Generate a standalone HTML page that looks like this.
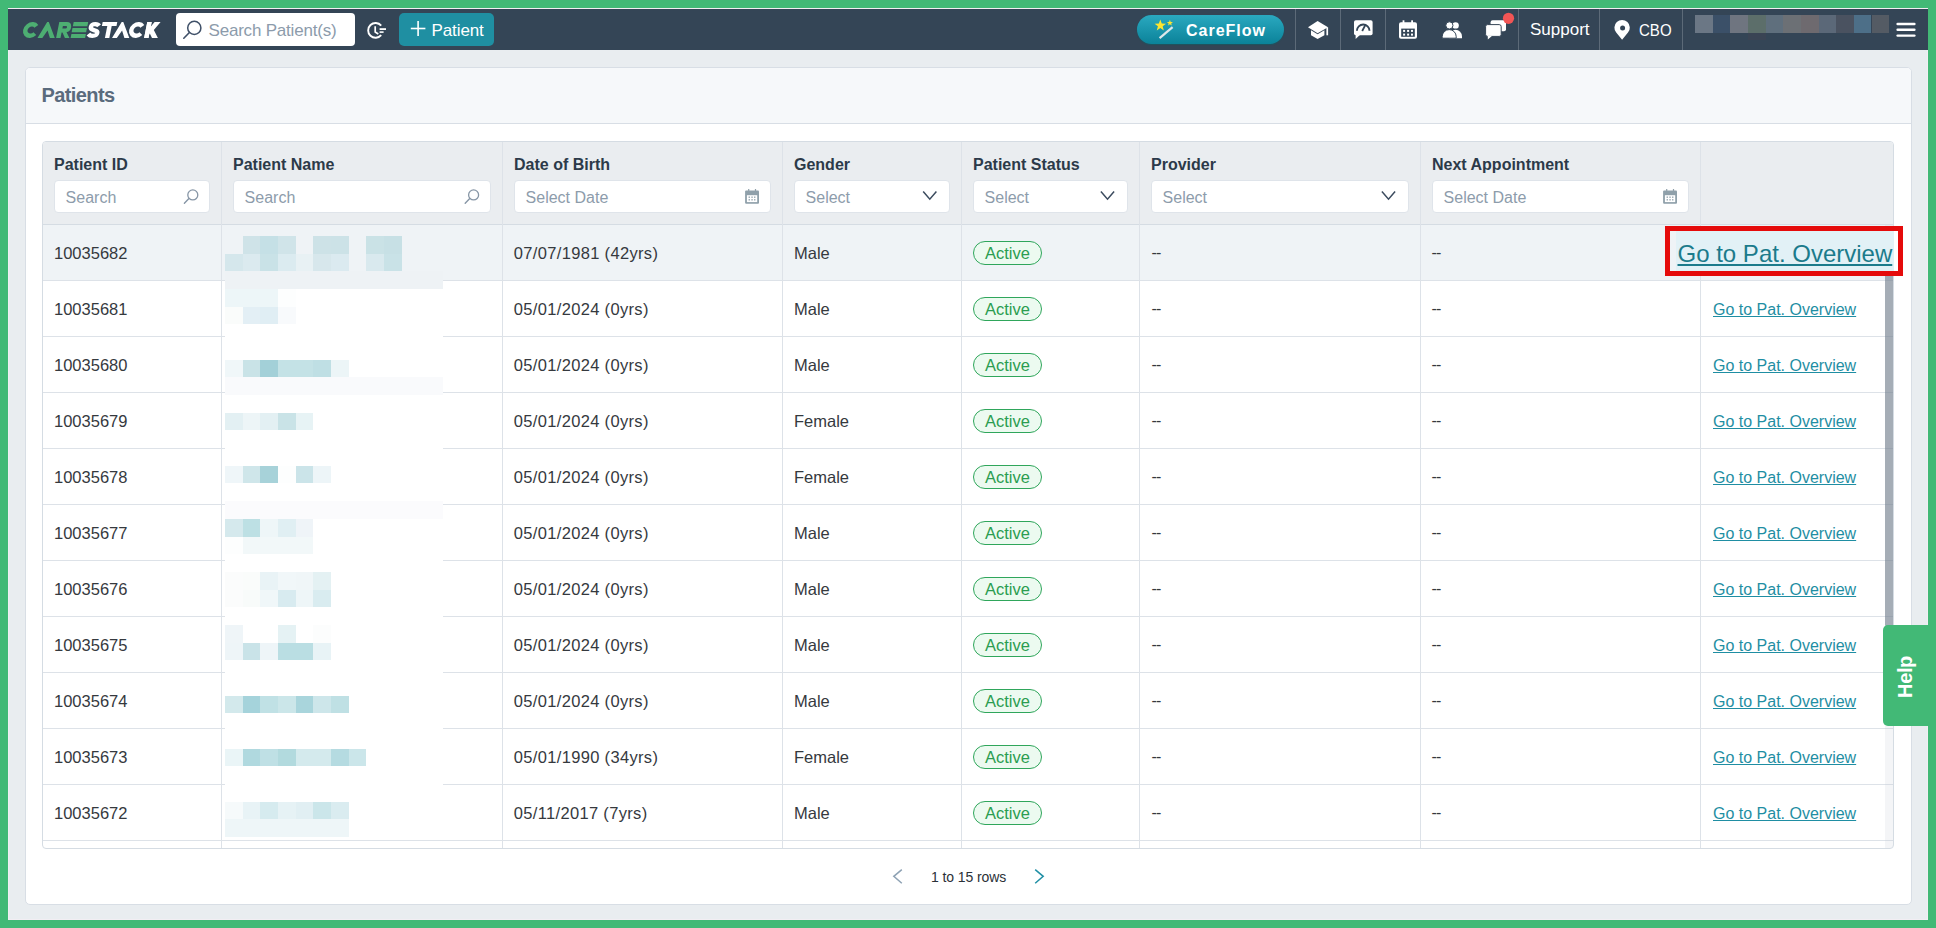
<!DOCTYPE html><html><head><meta charset="utf-8"><title>Patients</title><style>
*{box-sizing:border-box;margin:0;padding:0}
html,body{width:1936px;height:928px;overflow:hidden}
body{background:#42b976;font-family:"Liberation Sans",sans-serif;position:relative}
.a{position:absolute}
#inner{left:8px;top:8px;width:1920px;height:912px;background:#e9edf0;border:1px solid #f2eef3}
#nav{left:8px;top:9px;width:1920px;height:41px;background:#344556}
.t{position:absolute;white-space:nowrap;line-height:20px}
.sep{position:absolute;top:9px;width:1px;height:41px;background:#5c6a78}
#card{left:25px;top:67px;width:1887px;height:838px;background:#fff;border:1px solid #d8dee5;border-radius:5px;overflow:hidden}
#chead{left:0;top:0;width:1885px;height:56px;background:#f6f8fa;border-bottom:1px solid #d8dee5}
#tbl{left:42px;top:141px;width:1852px;height:708px;border:1px solid #d5dce3;border-radius:4px;overflow:hidden;background:#fff}
.hdr{position:absolute;left:0;top:0;width:1850px;height:83px;background:#eaedf0;border-bottom:1px solid #d5dce3}
.vl{position:absolute;top:0;width:1px;height:708px;background:#dde2e8}
.hl{position:absolute;left:0;width:1850px;height:1px;background:#dde2e8}
.lab{font-weight:bold;font-size:16px;color:#2c3a49}
.inp{position:absolute;top:38px;height:32px;background:#fff;border:1px solid #dfe4ea;border-radius:4px}
.ph{font-size:16px;color:#8d9cab}
.cell{font-size:16.5px;color:#35393e}
.dob{letter-spacing:0.33px}
.dash{letter-spacing:-0.9px;font-size:16px;margin-top:-0.5px}
.badge{position:absolute;width:69px;height:24px;border:1px solid #2fa65b;border-radius:12px;background:#ecfaf0;color:#2b9d50;font-size:16.5px;line-height:23px;text-align:center}
.lnk{font-size:16px;color:#1f8ea3;text-decoration:underline}
.blk{position:absolute;width:18px;height:18px}
</style></head><body>
<div id="inner" class="a"></div>
<div id="nav" class="a"></div>
<!--LOGO-->
<div class="a" style="left:176px;top:13px;width:179px;height:33px;background:#fff;border-radius:4px"></div>
<!--SEARCHICON-->
<div class="t" style="left:208.5px;top:21px;font-size:17px;letter-spacing:-0.2px;color:#8c9bab">Search Patient(s)</div>
<!--HISTORY-->
<div class="a" style="left:399px;top:13px;width:95px;height:33px;background:#1f8fa2;border-radius:5px"></div>
<!--PLUS-->
<div class="t" style="left:431.5px;top:21px;font-size:17px;letter-spacing:-0.1px;color:#fff">Patient</div>
<div class="a" style="left:1137px;top:15px;width:147px;height:29px;border-radius:15px;background:linear-gradient(#2aa9c0,#0b8299);box-shadow:0 1px 1px #1d5560"></div>
<!--WAND-->
<div class="t" style="left:1186px;top:21px;font-size:16px;font-weight:bold;color:#fff;letter-spacing:1px">CareFlow</div>
<div class="sep" style="left:1295px"></div>
<div class="sep" style="left:1340px"></div>
<div class="sep" style="left:1385px"></div>
<div class="sep" style="left:1518px"></div>
<div class="sep" style="left:1599px"></div>
<div class="sep" style="left:1682px"></div>
<!--ICONS-->
<div class="t" style="left:1530px;top:20px;font-size:17px;color:#fff">Support</div>
<div class="t" style="left:1639px;top:21px;font-size:17px;transform:scaleX(0.885);transform-origin:0 0;color:#fff">CBO</div>
<div class="a" style="left:1695.0px;top:14.7px;width:17.7px;height:18.3px;background:#6b7785"></div>
<div class="a" style="left:1712.7px;top:14.7px;width:17.7px;height:18.3px;background:#3b5068"></div>
<div class="a" style="left:1730.3px;top:14.7px;width:17.7px;height:18.3px;background:#6f7580"></div>
<div class="a" style="left:1748.0px;top:14.7px;width:17.7px;height:18.3px;background:#5c6e6a"></div>
<div class="a" style="left:1765.6px;top:14.7px;width:17.7px;height:18.3px;background:#5f6f7d"></div>
<div class="a" style="left:1783.2px;top:14.7px;width:17.7px;height:18.3px;background:#6c7075"></div>
<div class="a" style="left:1800.9px;top:14.7px;width:17.7px;height:18.3px;background:#6e6a6f"></div>
<div class="a" style="left:1818.5px;top:14.7px;width:17.7px;height:18.3px;background:#5b6878"></div>
<div class="a" style="left:1836.2px;top:14.7px;width:17.7px;height:18.3px;background:#4a5260"></div>
<div class="a" style="left:1853.8px;top:14.7px;width:17.7px;height:18.3px;background:#4d6f88"></div>
<div class="a" style="left:1871.5px;top:14.7px;width:17.7px;height:18.3px;background:#545b64"></div>
<div class="a" style="left:1748px;top:33px;width:18px;height:6.5px;background:#3a4454"></div>
<div id="card" class="a"><div id="chead" class="a"></div></div>
<div class="t" style="left:41.5px;top:85px;font-size:20px;letter-spacing:-0.6px;font-weight:bold;color:#5a6b7d">Patients</div>
<div id="tbl" class="a">
<div class="hdr"></div>
<div class="a" style="left:0;top:83px;width:1850px;height:55px;background:#eff3f6"></div>
<div class="hl" style="top:138px"></div>
<div class="hl" style="top:194px"></div>
<div class="hl" style="top:250px"></div>
<div class="hl" style="top:306px"></div>
<div class="hl" style="top:362px"></div>
<div class="hl" style="top:418px"></div>
<div class="hl" style="top:474px"></div>
<div class="hl" style="top:530px"></div>
<div class="hl" style="top:586px"></div>
<div class="hl" style="top:642px"></div>
<div class="hl" style="top:698px"></div>
<div class="vl" style="left:178px"></div>
<div class="vl" style="left:459px"></div>
<div class="vl" style="left:739px"></div>
<div class="vl" style="left:918px"></div>
<div class="vl" style="left:1096px"></div>
<div class="vl" style="left:1377px"></div>
<div class="vl" style="left:1657px"></div>
<div class="a" style="left:1842px;top:83px;width:8px;height:624px;background:rgba(200,205,215,0.2)"></div>
<div class="a" style="left:1842px;top:84px;width:8px;height:400px;background:rgba(112,125,138,0.6);border-radius:1px"></div>
</div>
<div class="t lab" style="left:54px;top:155px">Patient ID</div>
<div class="a" style="left:54px;top:180px;width:156px;height:33px;background:#fff;border:1px solid #dfe4ea;border-radius:4px"></div>
<div class="t ph" style="left:65.6px;top:188px">Search</div>
<div class="t lab" style="left:233px;top:155px">Patient Name</div>
<div class="a" style="left:233px;top:180px;width:258px;height:33px;background:#fff;border:1px solid #dfe4ea;border-radius:4px"></div>
<div class="t ph" style="left:244.6px;top:188px">Search</div>
<div class="t lab" style="left:514px;top:155px">Date of Birth</div>
<div class="a" style="left:514px;top:180px;width:257px;height:33px;background:#fff;border:1px solid #dfe4ea;border-radius:4px"></div>
<div class="t ph" style="left:525.6px;top:188px">Select Date</div>
<div class="t lab" style="left:794px;top:155px">Gender</div>
<div class="a" style="left:794px;top:180px;width:156px;height:33px;background:#fff;border:1px solid #dfe4ea;border-radius:4px"></div>
<div class="t ph" style="left:805.6px;top:188px">Select</div>
<div class="t lab" style="left:973px;top:155px">Patient Status</div>
<div class="a" style="left:973px;top:180px;width:155px;height:33px;background:#fff;border:1px solid #dfe4ea;border-radius:4px"></div>
<div class="t ph" style="left:984.6px;top:188px">Select</div>
<div class="t lab" style="left:1151px;top:155px">Provider</div>
<div class="a" style="left:1151px;top:180px;width:258px;height:33px;background:#fff;border:1px solid #dfe4ea;border-radius:4px"></div>
<div class="t ph" style="left:1162.6px;top:188px">Select</div>
<div class="t lab" style="left:1432px;top:155px">Next Appointment</div>
<div class="a" style="left:1432px;top:180px;width:257px;height:33px;background:#fff;border:1px solid #dfe4ea;border-radius:4px"></div>
<div class="t ph" style="left:1443.6px;top:188px">Select Date</div>
<!--INPUTICONS-->
<div class="t cell" style="left:54px;top:243px">10035682</div>
<div class="t cell dob" style="left:513.8px;top:243px">07/07/1981 (42yrs)</div>
<div class="t cell" style="left:794px;top:243px">Male</div>
<div class="badge" style="left:973px;top:241px">Active</div>
<div class="t cell dash" style="left:1151.5px;top:243px">--</div>
<div class="t cell dash" style="left:1431.5px;top:243px">--</div>
<div class="t cell" style="left:54px;top:299px">10035681</div>
<div class="t cell dob" style="left:513.8px;top:299px">05/01/2024 (0yrs)</div>
<div class="t cell" style="left:794px;top:299px">Male</div>
<div class="badge" style="left:973px;top:297px">Active</div>
<div class="t cell dash" style="left:1151.5px;top:299px">--</div>
<div class="t cell dash" style="left:1431.5px;top:299px">--</div>
<div class="t lnk" style="left:1713px;top:300px">Go to Pat. Overview</div>
<div class="t cell" style="left:54px;top:355px">10035680</div>
<div class="t cell dob" style="left:513.8px;top:355px">05/01/2024 (0yrs)</div>
<div class="t cell" style="left:794px;top:355px">Male</div>
<div class="badge" style="left:973px;top:353px">Active</div>
<div class="t cell dash" style="left:1151.5px;top:355px">--</div>
<div class="t cell dash" style="left:1431.5px;top:355px">--</div>
<div class="t lnk" style="left:1713px;top:356px">Go to Pat. Overview</div>
<div class="t cell" style="left:54px;top:411px">10035679</div>
<div class="t cell dob" style="left:513.8px;top:411px">05/01/2024 (0yrs)</div>
<div class="t cell" style="left:794px;top:411px">Female</div>
<div class="badge" style="left:973px;top:409px">Active</div>
<div class="t cell dash" style="left:1151.5px;top:411px">--</div>
<div class="t cell dash" style="left:1431.5px;top:411px">--</div>
<div class="t lnk" style="left:1713px;top:412px">Go to Pat. Overview</div>
<div class="t cell" style="left:54px;top:467px">10035678</div>
<div class="t cell dob" style="left:513.8px;top:467px">05/01/2024 (0yrs)</div>
<div class="t cell" style="left:794px;top:467px">Female</div>
<div class="badge" style="left:973px;top:465px">Active</div>
<div class="t cell dash" style="left:1151.5px;top:467px">--</div>
<div class="t cell dash" style="left:1431.5px;top:467px">--</div>
<div class="t lnk" style="left:1713px;top:468px">Go to Pat. Overview</div>
<div class="t cell" style="left:54px;top:523px">10035677</div>
<div class="t cell dob" style="left:513.8px;top:523px">05/01/2024 (0yrs)</div>
<div class="t cell" style="left:794px;top:523px">Male</div>
<div class="badge" style="left:973px;top:521px">Active</div>
<div class="t cell dash" style="left:1151.5px;top:523px">--</div>
<div class="t cell dash" style="left:1431.5px;top:523px">--</div>
<div class="t lnk" style="left:1713px;top:524px">Go to Pat. Overview</div>
<div class="t cell" style="left:54px;top:579px">10035676</div>
<div class="t cell dob" style="left:513.8px;top:579px">05/01/2024 (0yrs)</div>
<div class="t cell" style="left:794px;top:579px">Male</div>
<div class="badge" style="left:973px;top:577px">Active</div>
<div class="t cell dash" style="left:1151.5px;top:579px">--</div>
<div class="t cell dash" style="left:1431.5px;top:579px">--</div>
<div class="t lnk" style="left:1713px;top:580px">Go to Pat. Overview</div>
<div class="t cell" style="left:54px;top:635px">10035675</div>
<div class="t cell dob" style="left:513.8px;top:635px">05/01/2024 (0yrs)</div>
<div class="t cell" style="left:794px;top:635px">Male</div>
<div class="badge" style="left:973px;top:633px">Active</div>
<div class="t cell dash" style="left:1151.5px;top:635px">--</div>
<div class="t cell dash" style="left:1431.5px;top:635px">--</div>
<div class="t lnk" style="left:1713px;top:636px">Go to Pat. Overview</div>
<div class="t cell" style="left:54px;top:691px">10035674</div>
<div class="t cell dob" style="left:513.8px;top:691px">05/01/2024 (0yrs)</div>
<div class="t cell" style="left:794px;top:691px">Male</div>
<div class="badge" style="left:973px;top:689px">Active</div>
<div class="t cell dash" style="left:1151.5px;top:691px">--</div>
<div class="t cell dash" style="left:1431.5px;top:691px">--</div>
<div class="t lnk" style="left:1713px;top:692px">Go to Pat. Overview</div>
<div class="t cell" style="left:54px;top:747px">10035673</div>
<div class="t cell dob" style="left:513.8px;top:747px">05/01/1990 (34yrs)</div>
<div class="t cell" style="left:794px;top:747px">Female</div>
<div class="badge" style="left:973px;top:745px">Active</div>
<div class="t cell dash" style="left:1151.5px;top:747px">--</div>
<div class="t cell dash" style="left:1431.5px;top:747px">--</div>
<div class="t lnk" style="left:1713px;top:748px">Go to Pat. Overview</div>
<div class="t cell" style="left:54px;top:803px">10035672</div>
<div class="t cell dob" style="left:513.8px;top:803px">05/11/2017 (7yrs)</div>
<div class="t cell" style="left:794px;top:803px">Male</div>
<div class="badge" style="left:973px;top:801px">Active</div>
<div class="t cell dash" style="left:1151.5px;top:803px">--</div>
<div class="t cell dash" style="left:1431.5px;top:803px">--</div>
<div class="t lnk" style="left:1713px;top:804px">Go to Pat. Overview</div>
<div class="a" style="left:225px;top:225px;width:218px;height:55px;background:#eff3f6"></div>
<div class="a" style="left:225px;top:281px;width:218px;height:56px;background:#fff"></div>
<div class="a" style="left:225px;top:337px;width:218px;height:56px;background:#fff"></div>
<div class="a" style="left:225px;top:393px;width:218px;height:56px;background:#fff"></div>
<div class="a" style="left:225px;top:449px;width:218px;height:56px;background:#fff"></div>
<div class="a" style="left:225px;top:505px;width:218px;height:56px;background:#fff"></div>
<div class="a" style="left:225px;top:561px;width:218px;height:56px;background:#fff"></div>
<div class="a" style="left:225px;top:617px;width:218px;height:56px;background:#fff"></div>
<div class="a" style="left:225px;top:673px;width:218px;height:56px;background:#fff"></div>
<div class="a" style="left:225px;top:729px;width:218px;height:56px;background:#fff"></div>
<div class="a" style="left:225px;top:785px;width:218px;height:55px;background:#fff"></div>
<div class="a" style="left:225px;top:271.4px;width:218px;height:17.7px;background:#eef2f5"></div>
<div class="a" style="left:225px;top:377.4px;width:218px;height:17.7px;background:#f9fafc"></div>
<div class="a" style="left:225px;top:501.2px;width:218px;height:17.7px;background:#fbfbfd"></div>
<div class="a" style="left:242.7px;top:236.0px;width:17.7px;height:17.7px;background:#cfe3e8"></div>
<div class="a" style="left:260.4px;top:236.0px;width:17.7px;height:17.7px;background:#c5e0e6"></div>
<div class="a" style="left:278.0px;top:236.0px;width:17.7px;height:17.7px;background:#d0e4e9"></div>
<div class="a" style="left:313.4px;top:236.0px;width:17.7px;height:17.7px;background:#cde2e7"></div>
<div class="a" style="left:331.1px;top:236.0px;width:17.7px;height:17.7px;background:#cce2e7"></div>
<div class="a" style="left:366.4px;top:236.0px;width:17.7px;height:17.7px;background:#cae2e6"></div>
<div class="a" style="left:384.1px;top:236.0px;width:17.7px;height:17.7px;background:#c7e0e5"></div>
<div class="a" style="left:225.0px;top:253.7px;width:17.7px;height:17.7px;background:#d5e7ec"></div>
<div class="a" style="left:242.7px;top:253.7px;width:17.7px;height:17.7px;background:#dbeaef"></div>
<div class="a" style="left:260.4px;top:253.7px;width:17.7px;height:17.7px;background:#c9e2e7"></div>
<div class="a" style="left:278.0px;top:253.7px;width:17.7px;height:17.7px;background:#dbebf0"></div>
<div class="a" style="left:295.7px;top:253.7px;width:17.7px;height:17.7px;background:#e8f1f4"></div>
<div class="a" style="left:313.4px;top:253.7px;width:17.7px;height:17.7px;background:#d7e7ec"></div>
<div class="a" style="left:331.1px;top:253.7px;width:17.7px;height:17.7px;background:#dbeaf0"></div>
<div class="a" style="left:366.4px;top:253.7px;width:17.7px;height:17.7px;background:#d9e9ee"></div>
<div class="a" style="left:384.1px;top:253.7px;width:17.7px;height:17.7px;background:#c9e2e7"></div>
<div class="a" style="left:225.0px;top:289.0px;width:17.7px;height:17.7px;background:#edf6f8"></div>
<div class="a" style="left:242.7px;top:289.0px;width:17.7px;height:17.7px;background:#edf6f8"></div>
<div class="a" style="left:260.4px;top:289.0px;width:17.7px;height:17.7px;background:#edf6f8"></div>
<div class="a" style="left:278.0px;top:289.0px;width:17.7px;height:17.7px;background:#fdfefe"></div>
<div class="a" style="left:225.0px;top:306.7px;width:17.7px;height:17.7px;background:#fafcfb"></div>
<div class="a" style="left:242.7px;top:306.7px;width:17.7px;height:17.7px;background:#e3eff5"></div>
<div class="a" style="left:260.4px;top:306.7px;width:17.7px;height:17.7px;background:#e0eef4"></div>
<div class="a" style="left:278.0px;top:306.7px;width:17.7px;height:17.7px;background:#f8fafc"></div>
<div class="a" style="left:225.0px;top:359.8px;width:17.7px;height:17.7px;background:#f0f7f9"></div>
<div class="a" style="left:242.7px;top:359.8px;width:17.7px;height:17.7px;background:#c9e3e7"></div>
<div class="a" style="left:260.4px;top:359.8px;width:17.7px;height:17.7px;background:#a3d0d8"></div>
<div class="a" style="left:278.0px;top:359.8px;width:17.7px;height:17.7px;background:#c4e2e6"></div>
<div class="a" style="left:295.7px;top:359.8px;width:17.7px;height:17.7px;background:#c4e2e6"></div>
<div class="a" style="left:313.4px;top:359.8px;width:17.7px;height:17.7px;background:#bfdfe4"></div>
<div class="a" style="left:331.1px;top:359.8px;width:17.7px;height:17.7px;background:#ecf5f7"></div>
<div class="a" style="left:225.0px;top:412.8px;width:17.7px;height:17.7px;background:#e3f0f3"></div>
<div class="a" style="left:242.7px;top:412.8px;width:17.7px;height:17.7px;background:#edf5f7"></div>
<div class="a" style="left:260.4px;top:412.8px;width:17.7px;height:17.7px;background:#e3f0f3"></div>
<div class="a" style="left:278.0px;top:412.8px;width:17.7px;height:17.7px;background:#c9e3e7"></div>
<div class="a" style="left:295.7px;top:412.8px;width:17.7px;height:17.7px;background:#e7f3f5"></div>
<div class="a" style="left:225.0px;top:465.8px;width:17.7px;height:17.7px;background:#eff6f9"></div>
<div class="a" style="left:242.7px;top:465.8px;width:17.7px;height:17.7px;background:#cfe6ea"></div>
<div class="a" style="left:260.4px;top:465.8px;width:17.7px;height:17.7px;background:#a7d2d9"></div>
<div class="a" style="left:278.0px;top:465.8px;width:17.7px;height:17.7px;background:#fdfefe"></div>
<div class="a" style="left:295.7px;top:465.8px;width:17.7px;height:17.7px;background:#cbe4e9"></div>
<div class="a" style="left:313.4px;top:465.8px;width:17.7px;height:17.7px;background:#edf5f8"></div>
<div class="a" style="left:225.0px;top:518.9px;width:17.7px;height:17.7px;background:#d5e9ed"></div>
<div class="a" style="left:242.7px;top:518.9px;width:17.7px;height:17.7px;background:#bde0e4"></div>
<div class="a" style="left:260.4px;top:518.9px;width:17.7px;height:17.7px;background:#eef6f8"></div>
<div class="a" style="left:278.0px;top:518.9px;width:17.7px;height:17.7px;background:#e0eff3"></div>
<div class="a" style="left:295.7px;top:518.9px;width:17.7px;height:17.7px;background:#eff4f8"></div>
<div class="a" style="left:225.0px;top:536.6px;width:17.7px;height:17.7px;background:#fdfefe"></div>
<div class="a" style="left:242.7px;top:536.6px;width:17.7px;height:17.7px;background:#f2f8f9"></div>
<div class="a" style="left:260.4px;top:536.6px;width:17.7px;height:17.7px;background:#f2f8f9"></div>
<div class="a" style="left:278.0px;top:536.6px;width:17.7px;height:17.7px;background:#f2f8f9"></div>
<div class="a" style="left:295.7px;top:536.6px;width:17.7px;height:17.7px;background:#f2f8f9"></div>
<div class="a" style="left:225.0px;top:571.9px;width:17.7px;height:17.7px;background:#fbfcfc"></div>
<div class="a" style="left:242.7px;top:571.9px;width:17.7px;height:17.7px;background:#fafcfb"></div>
<div class="a" style="left:260.4px;top:571.9px;width:17.7px;height:17.7px;background:#e9f3f6"></div>
<div class="a" style="left:278.0px;top:571.9px;width:17.7px;height:17.7px;background:#f1f7f9"></div>
<div class="a" style="left:295.7px;top:571.9px;width:17.7px;height:17.7px;background:#f0f6f8"></div>
<div class="a" style="left:313.4px;top:571.9px;width:17.7px;height:17.7px;background:#e4f1f3"></div>
<div class="a" style="left:225.0px;top:589.6px;width:17.7px;height:17.7px;background:#fbfcfc"></div>
<div class="a" style="left:242.7px;top:589.6px;width:17.7px;height:17.7px;background:#f8fbfa"></div>
<div class="a" style="left:260.4px;top:589.6px;width:17.7px;height:17.7px;background:#f0f7f9"></div>
<div class="a" style="left:278.0px;top:589.6px;width:17.7px;height:17.7px;background:#d8ebf0"></div>
<div class="a" style="left:295.7px;top:589.6px;width:17.7px;height:17.7px;background:#eef6f8"></div>
<div class="a" style="left:313.4px;top:589.6px;width:17.7px;height:17.7px;background:#d9ecf0"></div>
<div class="a" style="left:225.0px;top:625.0px;width:17.7px;height:17.7px;background:#eff5f8"></div>
<div class="a" style="left:278.0px;top:625.0px;width:17.7px;height:17.7px;background:#e5f2f4"></div>
<div class="a" style="left:313.4px;top:625.0px;width:17.7px;height:17.7px;background:#fcfdfd"></div>
<div class="a" style="left:225.0px;top:642.6px;width:17.7px;height:17.7px;background:#eef5f8"></div>
<div class="a" style="left:242.7px;top:642.6px;width:17.7px;height:17.7px;background:#c9e3e8"></div>
<div class="a" style="left:260.4px;top:642.6px;width:17.7px;height:17.7px;background:#eef5f8"></div>
<div class="a" style="left:278.0px;top:642.6px;width:17.7px;height:17.7px;background:#badee3"></div>
<div class="a" style="left:295.7px;top:642.6px;width:17.7px;height:17.7px;background:#badee3"></div>
<div class="a" style="left:313.4px;top:642.6px;width:17.7px;height:17.7px;background:#e8f3f6"></div>
<div class="a" style="left:225.0px;top:695.7px;width:17.7px;height:17.7px;background:#d3e9ec"></div>
<div class="a" style="left:242.7px;top:695.7px;width:17.7px;height:17.7px;background:#a5d3db"></div>
<div class="a" style="left:260.4px;top:695.7px;width:17.7px;height:17.7px;background:#c0e1e5"></div>
<div class="a" style="left:278.0px;top:695.7px;width:17.7px;height:17.7px;background:#cbe6e9"></div>
<div class="a" style="left:295.7px;top:695.7px;width:17.7px;height:17.7px;background:#a9d5dc"></div>
<div class="a" style="left:313.4px;top:695.7px;width:17.7px;height:17.7px;background:#cde6ea"></div>
<div class="a" style="left:331.1px;top:695.7px;width:17.7px;height:17.7px;background:#bfe0e4"></div>
<div class="a" style="left:225.0px;top:748.7px;width:17.7px;height:17.7px;background:#eaf5f7"></div>
<div class="a" style="left:242.7px;top:748.7px;width:17.7px;height:17.7px;background:#b0d9df"></div>
<div class="a" style="left:260.4px;top:748.7px;width:17.7px;height:17.7px;background:#bfe0e5"></div>
<div class="a" style="left:278.0px;top:748.7px;width:17.7px;height:17.7px;background:#b2dade"></div>
<div class="a" style="left:295.7px;top:748.7px;width:17.7px;height:17.7px;background:#d4eaed"></div>
<div class="a" style="left:313.4px;top:748.7px;width:17.7px;height:17.7px;background:#d4eaed"></div>
<div class="a" style="left:331.1px;top:748.7px;width:17.7px;height:17.7px;background:#b5dbe1"></div>
<div class="a" style="left:348.8px;top:748.7px;width:17.7px;height:17.7px;background:#cbe6ea"></div>
<div class="a" style="left:225.0px;top:801.8px;width:17.7px;height:17.7px;background:#f6fafb"></div>
<div class="a" style="left:242.7px;top:801.8px;width:17.7px;height:17.7px;background:#e8f3f6"></div>
<div class="a" style="left:260.4px;top:801.8px;width:17.7px;height:17.7px;background:#d6ebef"></div>
<div class="a" style="left:278.0px;top:801.8px;width:17.7px;height:17.7px;background:#e6f2f5"></div>
<div class="a" style="left:295.7px;top:801.8px;width:17.7px;height:17.7px;background:#e1eff3"></div>
<div class="a" style="left:313.4px;top:801.8px;width:17.7px;height:17.7px;background:#cbe6ea"></div>
<div class="a" style="left:331.1px;top:801.8px;width:17.7px;height:17.7px;background:#daecf0"></div>
<div class="a" style="left:225.0px;top:819.4px;width:17.7px;height:17.7px;background:#eef6f8"></div>
<div class="a" style="left:242.7px;top:819.4px;width:17.7px;height:17.7px;background:#eef6f8"></div>
<div class="a" style="left:260.4px;top:819.4px;width:17.7px;height:17.7px;background:#eef6f8"></div>
<div class="a" style="left:278.0px;top:819.4px;width:17.7px;height:17.7px;background:#eef6f8"></div>
<div class="a" style="left:295.7px;top:819.4px;width:17.7px;height:17.7px;background:#eef6f8"></div>
<div class="a" style="left:313.4px;top:819.4px;width:17.7px;height:17.7px;background:#eef6f8"></div>
<div class="a" style="left:331.1px;top:819.4px;width:17.7px;height:17.7px;background:#eef6f8"></div>
<div class="a" style="left:1665px;top:226px;width:238px;height:50px;border:5px solid #e50b0b"></div>
<div class="a" style="left:1676px;top:231px;width:218px;height:40px;background:#e2f1f6"></div>
<div class="t" style="left:1677.5px;top:239.5px;font-size:24px;line-height:28px;color:#1b7b8b;text-decoration:underline;text-decoration-thickness:1.6px;text-underline-offset:2px">Go to Pat. Overview</div>
<!--PAGER-->
<div class="t" style="left:931px;top:867px;font-size:14px;letter-spacing:-0.1px;color:#2b3138">1 to 15 rows</div>
<div class="a" style="left:1883px;top:625px;width:53px;height:101px;background:#42b976;border-radius:5px 0 0 5px"></div>
<div class="t" style="left:1882px;top:667px;width:46px;font-size:20px;letter-spacing:-0.4px;font-weight:bold;color:#fff;transform:rotate(-90deg);text-align:center">Help</div>
<svg class="a" style="left:0;top:0;z-index:5;pointer-events:none" width="1936" height="928" viewBox="0 0 1936 928">
<g transform="matrix(1,0,-0.2,1,7.6,0)">
<path d="M34.0,26.3 A5.8,5.8 0 1 0 34.0,33.7" fill="none" stroke="#4dae72" stroke-width="4.4"/>
<polygon points="37.5,38 44,22 45.6,22 54.8,38 49.9,38 46.1,30.6 42.3,38" fill="#4dae72"/>
<path fill-rule="evenodd" fill="#4dae72" d="M56.1,38 V22 H63.6 A5.3,5.3 0 0 1 65.4,32.3 L69.5,38 H64.9 L61.4,32.6 H60.5 V38 Z M60.5,26 H63.6 A1.3,1.3 0 0 1 63.6,28.6 H60.5 Z"/>
<rect x="70.5" y="22.1" width="14.5" height="4.2" fill="#4dae72"/>
<rect x="70.5" y="28.1" width="14.5" height="4.1" fill="#4dae72"/>
<rect x="70.6" y="33.9" width="14.5" height="4.1" fill="#4dae72"/>
<path d="M96.6,25.9 C95.6,24.6 94,24.1 92.3,24.1 C90,24.1 88.6,25.3 88.6,27.1 C88.6,31.4 96.4,29 96.4,33.1 C96.4,34.9 94.8,35.9 92.3,35.9 C90.4,35.9 88.8,35.3 87.6,34.0" fill="none" stroke="#ffffff" stroke-width="4.2"/>
<rect x="99.5" y="22" width="14.6" height="4.1" fill="#ffffff"/>
<rect x="104.9" y="22" width="4.4" height="16" fill="#ffffff"/>
<polygon points="112,38 118.5,22 120.1,22 129.3,38 124.4,38 120.6,30.6 116.8,38" fill="#ffffff"/>
<path d="M140.0,26.3 A5.8,5.8 0 1 0 140.0,33.7" fill="none" stroke="#ffffff" stroke-width="4.4"/>
<rect x="144.1" y="22" width="4.4" height="16" fill="#ffffff"/>
<path d="M144.1,38 V22 H148.5 V26.4 L151.4,22 H157.4 L152.2,29.9 L157.9,38 H152 L148.9,33.5 L148.5,34.1 V38 Z" fill="#ffffff"/>
</g>
<circle cx="194.3" cy="27.9" r="6.6" fill="none" stroke="#3f5068" stroke-width="1.5"/>
<line x1="189.4" y1="32.5" x2="183.8" y2="38.2" stroke="#3f5068" stroke-width="1.6" stroke-linecap="round"/>
<path d="M381.2,25.6 A7.4,7.4 0 1 0 381.2,35.2" fill="none" stroke="#fff" stroke-width="1.9"/>
<polyline points="375.2,26.3 375.2,32 378.3,34" fill="none" stroke="#fff" stroke-width="1.7"/>
<line x1="379.6" y1="29.1" x2="386" y2="29.1" stroke="#fff" stroke-width="1.8"/>
<line x1="379.6" y1="32.1" x2="383.6" y2="32.1" stroke="#fff" stroke-width="1.6"/>
<line x1="410.8" y1="28.5" x2="425.4" y2="28.5" stroke="#fff" stroke-width="1.6"/>
<line x1="418.1" y1="21" x2="418.1" y2="36" stroke="#fff" stroke-width="1.6"/>
<line x1="1159.6" y1="38.2" x2="1172.6" y2="27.2" stroke="#dde7ea" stroke-width="2.2"/>
<polygon points="1160.30,19.60 1161.77,23.58 1166.01,23.75 1162.68,26.37 1163.83,30.45 1160.30,28.10 1156.77,30.45 1157.92,26.37 1154.59,23.75 1158.83,23.58" fill="#fde531"/>
<polygon points="1169.90,19.80 1170.69,21.91 1172.94,22.01 1171.18,23.42 1171.78,25.59 1169.90,24.35 1168.02,25.59 1168.62,23.42 1166.86,22.01 1169.11,21.91" fill="#fde531"/>
<path d="M1311,30.2 V35.2 L1317.6,39 L1324.4,35.2 V30.2 L1317.6,34.2 Z" fill="#fff"/>
<polygon points="1308,27.3 1317.6,21 1328,27.3 1317.6,33.2" fill="#fff"/>
<rect x="1326.4" y="27.3" width="1.7" height="8" fill="#fff"/>
<rect x="1354" y="20.3" width="18.6" height="15" rx="1.8" fill="#fff"/>
<polygon points="1355.6,34 1355.6,39.1 1361,34" fill="#fff"/>
<path d="M1356.9,30.8 A6.3,6.3 0 0 1 1369.5,30.8" fill="none" stroke="#344556" stroke-width="1.9"/>
<line x1="1362.2" y1="31" x2="1365.4" y2="24.8" stroke="#344556" stroke-width="1.8"/>
<rect x="1399" y="22.2" width="18" height="16.6" rx="2" fill="#fff"/>
<rect x="1401.2" y="28.6" width="13.6" height="8.2" fill="#344556"/>
<rect x="1403.1" y="29.9" width="2" height="2" fill="#fff"/>
<rect x="1403.1" y="33.6" width="2" height="2" fill="#fff"/>
<rect x="1407.1" y="29.9" width="2" height="2" fill="#fff"/>
<rect x="1407.1" y="33.6" width="2" height="2" fill="#fff"/>
<rect x="1411.0" y="29.9" width="2" height="2" fill="#fff"/>
<rect x="1411.0" y="33.6" width="2" height="2" fill="#fff"/>
<rect x="1402.6" y="20.3" width="1.8" height="3" fill="#fff"/>
<rect x="1411.2" y="20.3" width="1.8" height="3" fill="#fff"/>
<path d="M1449,38.2 V36.4 A6.5,6.6 0 0 1 1462,36.4 V38.2 Z" fill="#fff"/>
<circle cx="1455.6" cy="25.4" r="3.2" fill="#fff"/>
<path d="M1442.2,38.2 V36.6 A6.9,6.9 0 0 1 1456.2,36.6 V38.2 Z" fill="#fff" stroke="#344556" stroke-width="1"/>
<circle cx="1449.4" cy="25.4" r="3.6" fill="#fff" stroke="#344556" stroke-width="1"/>
<rect x="1490.6" y="20.3" width="15.4" height="11" rx="2" fill="#fff"/>
<rect x="1485.6" y="24.6" width="15.6" height="11.8" rx="2" fill="#fff" stroke="#344556" stroke-width="1"/>
<polygon points="1487.8,35.8 1487.8,39.4 1492.2,35.8" fill="#fff"/>
<circle cx="1508.5" cy="18.3" r="5.6" fill="#f25555"/>
<path fill-rule="evenodd" fill="#fff" d="M1622.1,39.7 L1616.2,32.6 A7.7,7.7 0 1 1 1628,32.6 Z M1622.6,28 m-2.5,0 a2.5,2.5 0 1 0 5,0 a2.5,2.5 0 1 0 -5,0 Z"/>
<line x1="1897.6" y1="24.0" x2="1914.4" y2="24.0" stroke="#fff" stroke-width="2.4" stroke-linecap="round"/>
<line x1="1897.6" y1="29.8" x2="1914.4" y2="29.8" stroke="#fff" stroke-width="2.4" stroke-linecap="round"/>
<line x1="1897.6" y1="35.6" x2="1914.4" y2="35.6" stroke="#fff" stroke-width="2.4" stroke-linecap="round"/>
<circle cx="192.8" cy="194.9" r="5" fill="none" stroke="#8796a6" stroke-width="1.3"/>
<line x1="188.7" y1="198.7" x2="184.4" y2="203.2" stroke="#8796a6" stroke-width="1.4" stroke-linecap="round"/>
<circle cx="473.6" cy="194.9" r="5" fill="none" stroke="#8796a6" stroke-width="1.3"/>
<line x1="469.5" y1="198.7" x2="465.2" y2="203.2" stroke="#8796a6" stroke-width="1.4" stroke-linecap="round"/>
<rect x="745.1" y="190.6" width="13.9" height="13.2" rx="1" fill="#8fa0aa"/>
<rect x="746.9" y="195.2" width="10.3" height="6.9" fill="#fff"/>
<rect x="748.6" y="196.5" width="1.3" height="1.4" fill="#8fa0aa"/>
<rect x="748.6" y="199.1" width="1.3" height="1.4" fill="#8fa0aa"/>
<rect x="751.4" y="196.5" width="1.3" height="1.4" fill="#8fa0aa"/>
<rect x="751.4" y="199.1" width="1.3" height="1.4" fill="#8fa0aa"/>
<rect x="754.1" y="196.5" width="1.3" height="1.4" fill="#8fa0aa"/>
<rect x="754.1" y="199.1" width="1.3" height="1.4" fill="#8fa0aa"/>
<rect x="748.1" y="189" width="1.2" height="2.4" fill="#8fa0aa"/>
<rect x="754.9" y="189" width="1.2" height="2.4" fill="#8fa0aa"/>
<rect x="1663.1" y="190.6" width="13.9" height="13.2" rx="1" fill="#8fa0aa"/>
<rect x="1664.9" y="195.2" width="10.3" height="6.9" fill="#fff"/>
<rect x="1666.6" y="196.5" width="1.3" height="1.4" fill="#8fa0aa"/>
<rect x="1666.6" y="199.1" width="1.3" height="1.4" fill="#8fa0aa"/>
<rect x="1669.4" y="196.5" width="1.3" height="1.4" fill="#8fa0aa"/>
<rect x="1669.4" y="199.1" width="1.3" height="1.4" fill="#8fa0aa"/>
<rect x="1672.1" y="196.5" width="1.3" height="1.4" fill="#8fa0aa"/>
<rect x="1672.1" y="199.1" width="1.3" height="1.4" fill="#8fa0aa"/>
<rect x="1666.1" y="189" width="1.2" height="2.4" fill="#8fa0aa"/>
<rect x="1672.9" y="189" width="1.2" height="2.4" fill="#8fa0aa"/>
<polyline points="923.2,191.4 929.8,199.2 936.4,191.4" fill="none" stroke="#3b4b5e" stroke-width="1.5"/>
<polyline points="1100.9,191.4 1107.5,199.2 1114.1,191.4" fill="none" stroke="#3b4b5e" stroke-width="1.5"/>
<polyline points="1381.9,191.4 1388.5,199.2 1395.1,191.4" fill="none" stroke="#3b4b5e" stroke-width="1.5"/>
<polyline points="901.8,869.6 893.8,876.3 901.8,883.2" fill="none" stroke="#8ea2b4" stroke-width="1.5"/>
<polyline points="1035.2,869.6 1043.2,876.3 1035.2,883.2" fill="none" stroke="#1f8fa5" stroke-width="1.5"/>
</svg>
</body></html>
